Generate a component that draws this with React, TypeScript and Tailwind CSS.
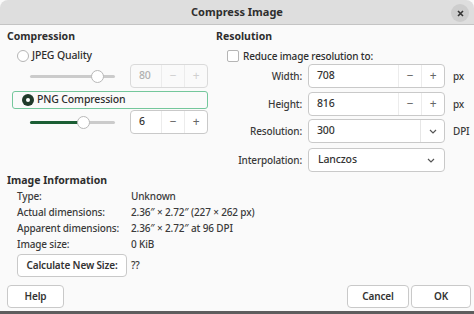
import React from "react";

const font = { fontFamily: '"Noto Sans", "DejaVu Sans", sans-serif' };

function Spin({ value, disabled, w }: { value: string; disabled?: boolean; w: string }) {
  const tc = disabled ? "text-[#b0b0b0]" : "text-[#333]";
  const bc = disabled ? "border-[#dadada]" : "border-[#c9c9c9]";
  const sc = disabled ? "text-[#d0d0d0]" : "text-[#666]";
  return (
    <div className={`flex h-full ${w} rounded-[4px] border ${bc} ${disabled ? "bg-[#fafafa]" : "bg-white"}`}>
      <div className={`flex-1 flex items-center pl-[8px] font-medium text-[10.5px] ${tc}`}>{value}</div>
      <div className={`w-[23px] flex items-center justify-center border-l border-[#ececec] ${sc} text-[12px]`}>−</div>
      <div className={`w-[23px] flex items-center justify-center border-l border-[#ececec] ${sc} text-[12px]`}>+</div>
    </div>
  );
}

function Chevron() {
  return (
    <svg width="8" height="5" viewBox="0 0 8 5">
      <path d="M1 1 L4 4 L7 1" fill="none" stroke="#555" strokeWidth="1.2" />
    </svg>
  );
}

function Slider({ pos, active }: { pos: number; active?: boolean }) {
  return (
    <div className="relative w-[85px] h-[14px]">
      <div className="absolute left-0 right-0 top-[6px] h-[3px] rounded bg-[#cbcbcb]" />
      {active && <div className="absolute left-0 top-[6px] h-[3px] rounded bg-[#1b5e34]" style={{ width: pos }} />}
      <div
        className="absolute top-[1px] w-[13px] h-[13px] rounded-full bg-white border border-[#b8b8b8]"
        style={{ left: pos - 6 }}
      />
    </div>
  );
}

const btn =
  "h-full rounded-[4px] border border-[#c9c9c9] bg-white flex items-center justify-center font-semibold text-[#333]";

export default function App() {
  return (
    <div
      className="w-[474px] h-[314px] flex flex-col bg-[#fafafa] text-[10px] tracking-[-0.15px] text-[#3a3a3a] overflow-hidden"
      style={font}
    >
      {/* title bar */}
      <div className="h-[25px] shrink-0 flex items-center justify-center relative bg-[#dedede] border-b border-[#c4c4c4] rounded-t-[8px]">
        <span className="font-bold text-[11px] tracking-normal text-[#2e2e2e]">Compress Image</span>
        <div className="absolute right-[5px] top-[4px] w-[18px] h-[18px] rounded-full bg-[#cdcdcd] flex items-center justify-center">
          <svg width="7" height="7" viewBox="0 0 7 7">
            <path d="M1 1 L6 6 M6 1 L1 6" stroke="#333" strokeWidth="1.6" />
          </svg>
        </div>
      </div>

      <div className="flex-1 flex flex-col pl-[7px] pr-[3px]">
        <div className="flex">
          {/* left column */}
          <div className="w-[209px] flex flex-col pt-[5px]">
            <div className="h-[14px] flex items-center font-bold text-[10.5px] tracking-normal text-[#2e2e2e]">Compression</div>
            <div className="h-[14px] mt-[5px] flex items-center pl-[10px] gap-[3px]">
              <div className="w-[12px] h-[12px] rounded-full border border-[#b5b5b5] bg-white" />
              <span className="text-[#2e2e2e] font-medium text-[10.5px]">JPEG Quality</span>
            </div>
            <div className="h-[24px] mt-[1px] flex items-center">
              <div className="w-[123px] pl-[23px]">
                <Slider pos={67} />
              </div>
              <Spin value="80" disabled w="w-[78px]" />
            </div>
            <div className="h-[18px] mt-[3px] ml-[5px] w-[196px] flex items-center pl-[9px] gap-[3px] border-[1.5px] border-[#74c79c] rounded-[3px]">
              <div className="w-[12px] h-[12px] rounded-full bg-[#1f3a2a] flex items-center justify-center">
                <div className="w-[4px] h-[4px] rounded-full bg-white" />
              </div>
              <span className="text-[#2e2e2e] font-medium text-[10.5px]">PNG Compression</span>
            </div>
            <div className="h-[24px] mt-[1px] flex items-center">
              <div className="w-[123px] pl-[23px]">
                <Slider pos={53} active />
              </div>
              <Spin value="6" w="w-[78px]" />
            </div>
          </div>

          {/* right column */}
          <div className="flex-1 flex flex-col pt-[5px]">
            <div className="h-[14px] flex items-center font-bold text-[10.5px] tracking-normal text-[#2e2e2e]">Resolution</div>
            <div className="h-[14px] mt-[5px] flex items-center pl-[11px] gap-[4px]">
              <div className="w-[12px] h-[12px] rounded-[2px] border border-[#b5b5b5] bg-white" />
              <span className="text-[#2e2e2e] font-medium">Reduce image resolution to:</span>
            </div>
            <div className="h-[24px] mt-[1px] flex items-center">
              <div className="w-[92px] text-right pr-[6px] font-medium">Width:</div>
              <Spin value="708" w="w-[137px]" />
              <span className="ml-[8px] font-medium">px</span>
            </div>
            <div className="h-[24px] mt-[4px] flex items-center">
              <div className="w-[92px] text-right pr-[6px] font-medium">Height:</div>
              <Spin value="816" w="w-[137px]" />
              <span className="ml-[8px] font-medium">px</span>
            </div>
            <div className="h-[24px] mt-[3px] flex items-center">
              <div className="w-[92px] text-right pr-[6px] font-medium">Resolution:</div>
              <div className="flex h-full w-[137px] rounded-[4px] border border-[#c9c9c9] bg-white">
                <div className="flex-1 flex items-center pl-[8px] font-medium text-[10.5px] text-[#333]">300</div>
                <div className="w-[24px] flex items-center justify-center border-l border-[#e6e6e6]">
                  <Chevron />
                </div>
              </div>
              <span className="ml-[8px] font-medium">DPI</span>
            </div>
            <div className="h-[24px] mt-[5px] flex items-center">
              <div className="w-[92px] text-right pr-[6px] font-medium">Interpolation:</div>
              <div className="flex h-full w-[137px] rounded-[4px] border border-[#c9c9c9] bg-white items-center pl-[9px] pr-[9px]">
                <span className="flex-1 font-medium text-[10.5px] text-[#333]">Lanczos</span>
                <Chevron />
              </div>
            </div>
          </div>
        </div>

        {/* image information */}
        <div className="h-[14px] mt-[2px] flex items-center font-bold text-[10.5px] tracking-normal text-[#2e2e2e]">Image Information</div>
        <div className="flex flex-col pl-[10px]">
          {[
            ["Type:", "Unknown"],
            ["Actual dimensions:", "2.36″ × 2.72″ (227 × 262 px)"],
            ["Apparent dimensions:", "2.36″ × 2.72″ at 96 DPI"],
            ["Image size:", "0 KiB"],
          ].map(([a, b]) => (
            <div key={a} className="h-[16px] flex items-center font-medium">
              <span className="w-[114px]">{a}</span>
              <span>{b}</span>
            </div>
          ))}
          <div className="h-[23px] mt-[2px] flex items-center">
            <div className={`w-[110px] ${btn} font-medium`}>Calculate New Size:</div>
            <span className="ml-[4px] font-medium">??</span>
          </div>
        </div>

        <div className="h-[23px] mt-[8px] flex items-center">
          <div className={`w-[57px] ${btn}`}>Help</div>
          <div className="flex-1" />
          <div className={`w-[62px] ${btn}`}>Cancel</div>
          <div className={`w-[60px] ml-[2px] ${btn}`}>OK</div>
        </div>
      </div>
      <div className="h-[3px] shrink-0 bg-[#5e5e5e]" />
    </div>
  );
}
